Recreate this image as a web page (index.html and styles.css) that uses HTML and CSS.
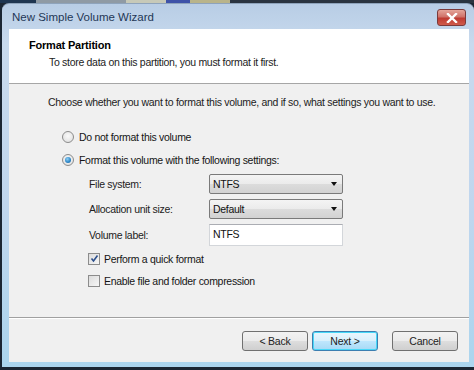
FILE: index.html
```html
<!DOCTYPE html>
<html>
<head>
<meta charset="utf-8">
<link rel="stylesheet" href="styles.css">
</head>
<body>
<div class="screen">
  <div class="taskbar">
    <span class="tb tb1"></span><span class="tb tb2"></span><span class="tb tb3"></span><span class="tb tb4"></span><span class="tb tb5"></span>
  </div>
  <div class="window">
    <div class="titlebar">
      <span class="title">New Simple Volume Wizard</span>
      <span class="close"><svg width="12" height="10" viewBox="0 0 12 10"><path d="M2 1 L10 9 M10 1 L2 9" stroke="#fff" stroke-width="2.4" stroke-linecap="square"/></svg></span>
    </div>
    <div class="client">
      <div class="header">
        <div class="h-title">Format Partition</div>
        <div class="h-sub">To store data on this partition, you must format it first.</div>
      </div>
      <div class="body">
        <div class="intro">Choose whether you want to format this volume, and if so, what settings you want to use.</div>
        <div class="radio-row"><span class="radio"></span><span>Do not format this volume</span></div>
        <div class="radio-row r2"><span class="radio checked"></span><span>Format this volume with the following settings:</span></div>
        <div class="settings">
          <div class="field"><span class="label">File system:</span><div class="combo"><span>NTFS</span><span class="arrow"></span></div></div>
          <div class="field"><span class="label">Allocation unit size:</span><div class="combo"><span>Default</span><span class="arrow"></span></div></div>
          <div class="field"><span class="label">Volume label:</span><div class="textbox">NTFS</div></div>
        </div>
        <div class="check-row c1"><span class="check checked"><svg width="9" height="9" viewBox="0 0 9 9"><path d="M1.5 4.5 L3.5 7 L7.5 1.5" fill="none" stroke="#2c4f8c" stroke-width="1.6"/></svg></span><span>Perform a quick format</span></div>
        <div class="check-row c2"><span class="check"></span><span>Enable file and folder compression</span></div>
      </div>
      <div class="footer">
        <button class="btn">&lt; Back</button>
        <button class="btn default">Next &gt;</button>
        <button class="btn cancel">Cancel</button>
      </div>
    </div>
  </div>
</div>
</body>
</html>
```
FILE: styles.css
```css
* { box-sizing: border-box; }
html, body { margin: 0; padding: 0; }
body {
  width: 474px; height: 370px; overflow: hidden;
  background: #1b2633;
  font-family: "Liberation Sans", Arial, sans-serif;
  font-size: 10.5px;
  letter-spacing: -0.3px;
  color: #151515;
}
.screen { width: 474px; height: 370px; position: relative; }
.taskbar {
  height: 3px;
  display: flex;
  background: #2a3440;
}
.tb { height: 3px; display: block; }
.tb1 { width: 36px; background: #1e3550; }
.tb2 { width: 90px; background: #8f9aa4; }
.tb3 { width: 40px; background: #c7c9b8; }
.tb4 { width: 24px; background: #3e52a8; }
.tb5 { width: 40px; background: #b9b48a; }

.window {
  margin-left: 2px;
  width: 472px;
  height: 364px;
  border-radius: 7px 7px 0 0;
  background: linear-gradient(to bottom, #b8cde5 0px, #c8daee 40px, #c0d6ee 200px, #abd5ee 364px);
  padding: 0 5px 5px 7px;
  display: flex;
  flex-direction: column;
  border-top: 1px solid #8ea3bb;
}
.titlebar {
  height: 25px;
  display: flex;
  align-items: center;
  justify-content: space-between;
  padding: 0 0 0 3px;
}
.title {
  font-size: 11.5px;
  letter-spacing: 0;
  color: #1f3756;
}
.close {
  width: 29px; height: 17px;
  margin-right: 3px; margin-top: 2px;
  border-radius: 3px;
  border: 1px solid #7c3a3a;
  background: linear-gradient(to bottom, #e5a59a 0%, #d0736a 45%, #bf3b32 55%, #cf5b4c 100%);
  display: flex; align-items: center; justify-content: center;
}
.client {
  flex: 1;
  background: #f0f0f0;
  display: flex;
  flex-direction: column;
}
.header {
  height: 55px;
  background: #fff;
  border-bottom: 1px solid #a6a6a6;
  padding: 10px 0 0 20px;
}
.h-title { font-weight: bold; font-size: 11px; letter-spacing: -0.2px; color: #000; line-height: 13px; }
.h-sub { padding-left: 20px; margin-top: 4px; line-height: 13px; color: #222; }
.body {
  height: 234px;
  border-bottom: 1px solid #a0a0a0;
  box-shadow: 0 1px 0 #fff;
  padding: 12px 0 0 39px;
}
.intro { line-height: 13px; color: #222; white-space: nowrap; }
.radio-row {
  display: flex; align-items: center;
  margin-top: 21px; margin-left: 14px;
  height: 13px;
}
.radio-row.r2 { margin-top: 10px; }
.radio {
  width: 12px; height: 12px; border-radius: 50%;
  border: 1px solid #8c8c8c;
  background: radial-gradient(circle at 50% 40%, #fafafa 0%, #dcdcdc 100%);
  margin-right: 5px;
  position: relative;
}
.radio.checked::after {
  content: ""; position: absolute; left: 2px; top: 2px;
  width: 6px; height: 6px; border-radius: 50%;
  background: radial-gradient(circle at 40% 35%, #8fd0f5 0%, #2a84c6 60%, #1b5d96 100%);
}
.settings { margin-left: 41px; margin-top: 8px; }
.field { display: flex; align-items: center; height: 20px; margin-bottom: 5px; }
.field:nth-child(3) { height: 22px; }
.label { width: 120px; color: #222; }
.combo {
  width: 134px; height: 20px;
  border: 1px solid #7a7a7a;
  border-radius: 2px;
  background: linear-gradient(to bottom, #f4f4f4 0%, #ebebeb 50%, #dcdcdc 51%, #d2d2d2 100%);
  display: flex; align-items: center; justify-content: space-between;
  padding: 0 5px 0 3px;
  color: #111;
}
.arrow {
  width: 0; height: 0;
  border-left: 3.5px solid transparent; border-right: 3.5px solid transparent;
  border-top: 4px solid #111;
}
.textbox {
  width: 134px; height: 22px;
  border: 1px solid #d3d6da;
  border-top-color: #abadb3;
  background: #fff;
  padding: 3px 0 0 3px;
  color: #111;
}
.check-row {
  display: flex; align-items: center;
  margin-left: 40px; height: 13px;
}
.check-row.c1 { margin-top: 6px; }
.check-row.c2 { margin-top: 9px; }
.check {
  width: 12px; height: 12px;
  border: 1px solid #8c8c8c;
  background: linear-gradient(135deg, #dcdcdc 0%, #f6f6f6 100%);
  margin-right: 4px;
  display: flex; align-items: center; justify-content: center;
}
.footer {
  flex: 1;
  display: flex;
  align-items: flex-start;
  padding: 13px 0 0 233px;
}
.btn {
  width: 66px; height: 20px;
  font-family: inherit; font-size: 10.5px; letter-spacing: -0.2px; color: #222;
  border: 1px solid #707070;
  border-radius: 3px;
  background: linear-gradient(to bottom, #f2f2f2 0%, #ebebeb 48%, #dddddd 52%, #cfcfcf 100%);
  padding: 0;
  margin-right: 4px;
}
.btn.default {
  border-color: #3c7fb1;
  box-shadow: inset 0 0 0 1px #48d8f8;
  background: linear-gradient(to bottom, #eaf6fd 0%, #d9f0fc 48%, #bee6fd 52%, #a7d9f5 100%);
}
.btn.cancel { margin-left: 10px; }
```
